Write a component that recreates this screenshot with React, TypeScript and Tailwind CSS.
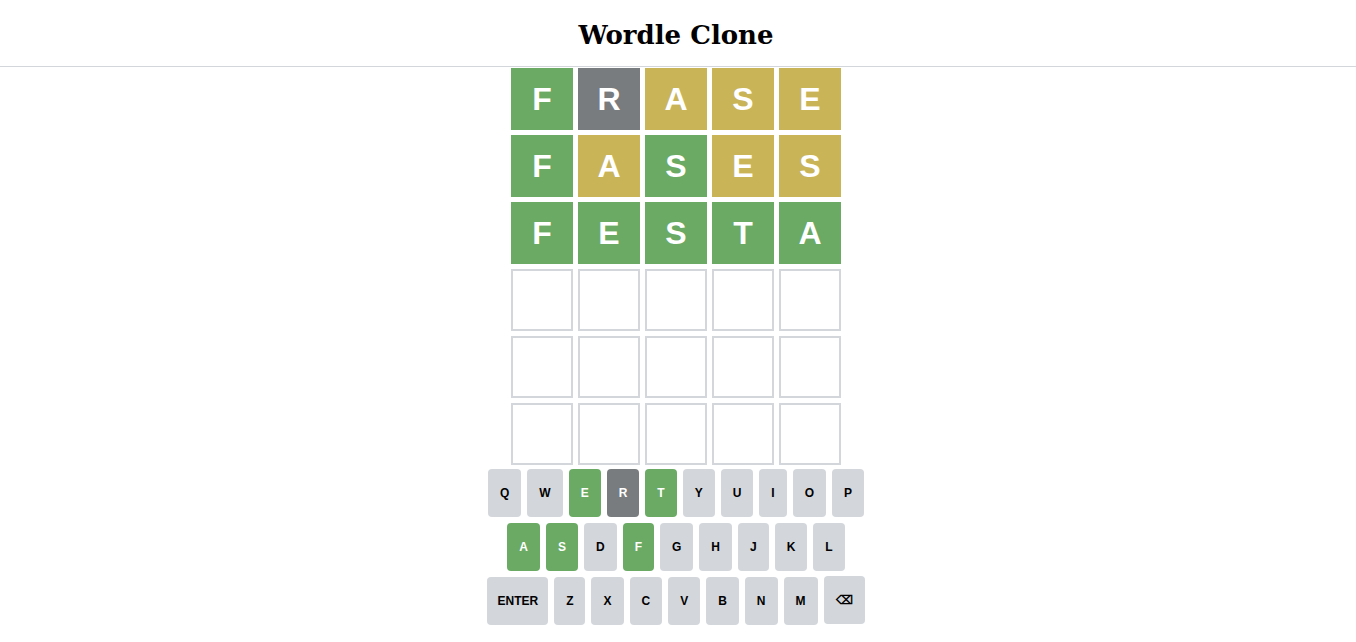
import React from "react";

type Mark = "correct" | "present" | "absent";

const guesses: { word: string; marks: Mark[] }[] = [
  { word: "FRASE", marks: ["correct", "absent", "present", "present", "present"] },
  { word: "FASES", marks: ["correct", "present", "correct", "present", "present"] },
  { word: "FESTA", marks: ["correct", "correct", "correct", "correct", "correct"] },
];

const keyRows = [
  ["Q", "W", "E", "R", "T", "Y", "U", "I", "O", "P"],
  ["A", "S", "D", "F", "G", "H", "J", "K", "L"],
  ["ENTER", "Z", "X", "C", "V", "B", "N", "M", "⌫"],
];

const keyState: Record<string, Mark> = {
  E: "correct",
  R: "absent",
  T: "correct",
  A: "correct",
  S: "correct",
  F: "correct",
};

const tileColor = (m: Mark) => {
  switch (m) {
    case "correct": return "bg-[#6aaa64]";
    case "present": return "bg-[#c9b458]";
    case "absent": return "bg-[#787c7e]";
  }
};

const Tile = ({ letter, mark }: { letter?: string; mark?: Mark }) => {
  if (!mark) {
    return <div className="w-[62px] h-[62px] border-2 border-[#d3d6da] bg-white" />;
  }
  return (
    <div
      className={`w-[62px] h-[62px] flex items-center justify-center text-white text-[32px] font-bold ${tileColor(mark)}`}
    >
      {letter}
    </div>
  );
};

const Key = ({ label }: { label: string }) => {
  const state = keyState[label];
  const color = state
    ? `${tileColor(state)} text-white`
    : "bg-[#d3d6da] text-black";
  const isBack = label === "⌫";
  const isEnter = label === "ENTER";
  return (
    <button
      className={`h-12 rounded flex items-center justify-center text-xs font-bold ${color} ${
        isEnter ? "px-[10px]" : "px-3"
      } ${isBack ? "-mt-px" : ""}`}
    >
      {label}
    </button>
  );
};

export default function App() {
  const rows = [...guesses];
  while (rows.length < 6) rows.push({ word: "", marks: [] });

  return (
    <div className="min-h-screen bg-white pr-1" style={{ fontFamily: '"Liberation Sans", Arial, sans-serif' }}>
      <header className="h-[67px] border-b border-[#d3d6da] flex items-center justify-center -mr-1 pr-1 pt-[5px]">
        <h1
          className="text-[26px] font-bold text-black"
          style={{ fontFamily: '"DejaVu Serif", "Liberation Serif", serif' }}
        >
          Wordle Clone
        </h1>
      </header>

      <div className="flex flex-col items-center gap-[5px] pt-px">
        {rows.map((r, i) => (
          <div key={i} className="flex gap-[5px]">
            {Array.from({ length: 5 }).map((_, j) => (
              <Tile key={j} letter={r.word[j]} mark={r.marks[j]} />
            ))}
          </div>
        ))}
      </div>

      <div className="flex flex-col items-center gap-1.5 mt-1">
        {keyRows.map((row, i) => (
          <div key={i} className="flex gap-1.5">
            {row.map((k) => (
              <Key key={k} label={k} />
            ))}
          </div>
        ))}
      </div>
    </div>
  );
}
